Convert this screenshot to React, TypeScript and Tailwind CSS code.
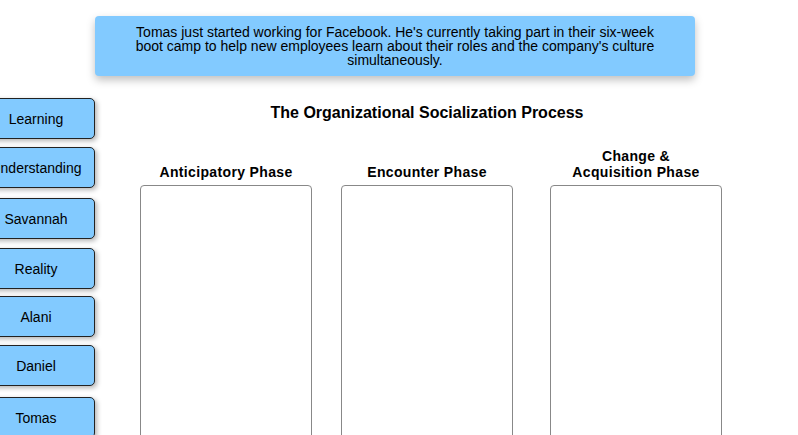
const items = [
  { label: "Learning", mt: "mt-0" },
  { label: "Understanding", mt: "mt-[8px]" },
  { label: "Savannah", mt: "mt-[10px]" },
  { label: "Reality", mt: "mt-[9px]" },
  { label: "Alani", mt: "mt-[7px]" },
  { label: "Daniel", mt: "mt-[8px]" },
  { label: "Tomas", mt: "mt-[11px]" },
];

const phases = [
  { title: ["Anticipatory Phase"], ml: "ml-0" },
  { title: ["Encounter Phase"], ml: "ml-[29px]" },
  { title: ["Change &", "Acquisition Phase"], ml: "ml-[37px]" },
];

export default function App() {
  return (
    <div className="w-[798px] h-[435px] overflow-hidden bg-white text-black font-['Liberation_Sans',Arial,sans-serif]">
      {/* Scenario banner */}
      <div className="ml-[95px] mt-[16px] w-[600px] rounded-[4px] bg-[#82caff] px-[30px] py-[9px] text-center text-[14px] leading-[14px] shadow-[0_4px_8px_rgba(0,0,0,0.25)]">
        Tomas just started working for Facebook. He's currently taking part in their six-week boot camp to help new
        employees learn about their roles and the company's culture simultaneously.
      </div>

      <div className="mt-[22px] flex">
        {/* Draggable answer chips */}
        <div className="-ml-[23px] flex w-[118px] shrink-0 flex-col">
          {items.map((it) => (
            <div
              key={it.label}
              className={`${it.mt} flex h-[41px] items-center justify-center rounded-[5px] border border-[#222] bg-[#82caff] pt-[1px] text-[14px] whitespace-nowrap shadow-[2px_2px_5px_rgba(0,0,0,0.3)]`}
            >
              {it.label}
            </div>
          ))}
        </div>

        {/* Sorting area */}
        <div className="w-[664px] shrink-0">
          <h2 className="mt-[5px] text-center text-[16px] leading-[20px] font-bold">
            The Organizational Socialization Process
          </h2>
          <div className="mt-[21px] ml-[45px] flex">
            {phases.map((p) => (
              <div key={p.title.join(" ")} className={`${p.ml} flex w-[172px] flex-col`}>
                <div className="flex h-[36px] flex-col items-center justify-end text-[14px] leading-[16px] font-bold tracking-[0.35px]">
                  {p.title.map((t) => (
                    <span key={t}>{t}</span>
                  ))}
                </div>
                <div className="mt-[5px] h-[270px] rounded-[4px] border border-[#888]" />
              </div>
            ))}
          </div>
        </div>
      </div>
    </div>
  );
}
